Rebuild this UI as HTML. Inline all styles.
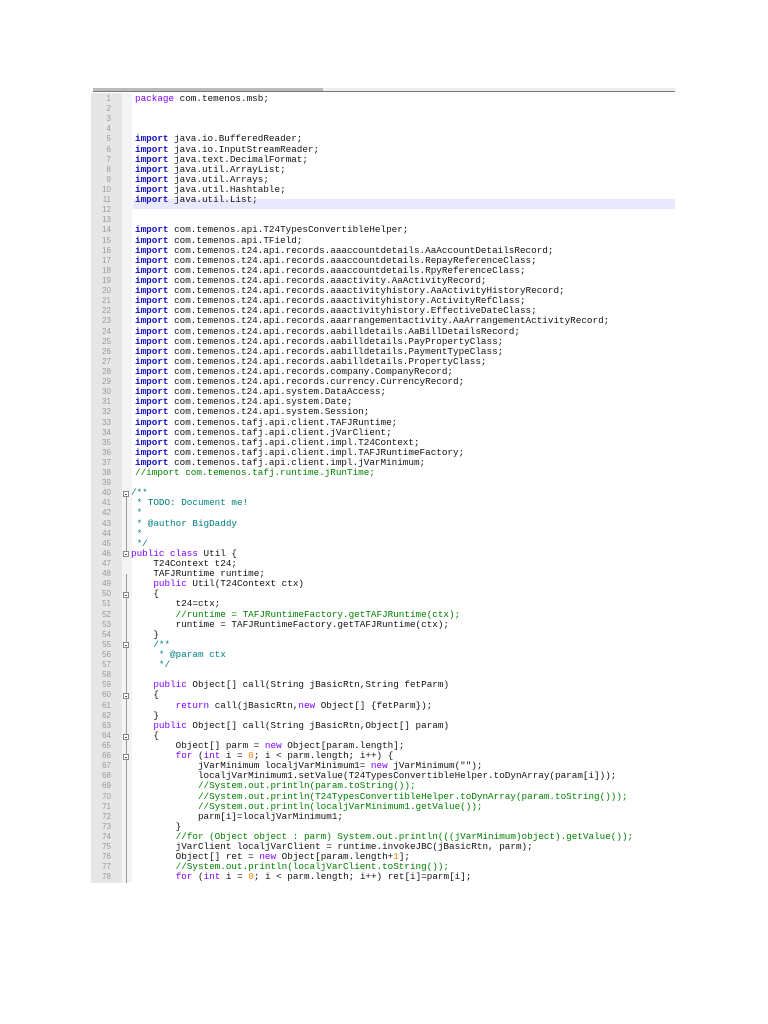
<!DOCTYPE html>
<html><head><meta charset="utf-8"><style>
html,body{margin:0;padding:0;background:#fff;width:768px;height:1024px;overflow:hidden}
.bar{position:absolute;left:93px;top:88px;width:582px;height:3px;background:#eee;border-bottom:1px solid #777}
.bar i{position:absolute;left:0;top:0;width:230px;height:3px;background:#bbb}
.gut{position:absolute;left:91px;top:93px;width:31px;height:790px;background:#e6e6e6}
.fold{position:absolute;left:122px;top:93px;width:10px;height:790px;background:#f4f4f4}
.hl{position:absolute;left:133px;top:199px;width:542px;height:10px;background:#e8e8ff}
.nums{position:absolute;left:91px;top:94px;width:20px;text-align:right;font:8px/10.12px "Liberation Sans",sans-serif;color:#999}
.nums div{height:10.12px}
.code{position:absolute;left:131px;top:94px;font:9.3px/10.12px "Liberation Mono",monospace;color:#111}
.code div{height:10.12px;white-space:pre}
.k{color:#1010c0;font-weight:bold}.p{color:#8000ff}.c{color:#008000}.d{color:#008080}.n{color:#ff8000}.i{padding-left:4px}
.fb{position:absolute;left:123px;width:6px;height:6px;border:1px solid #888;background:#fff;box-sizing:border-box}
.fb:after{content:"";position:absolute;left:1px;top:2px;width:2px;height:1px;background:#555}
.vl{position:absolute;left:126px;width:1px;background:#999}
</style></head><body>
<div class="bar"><i></i></div>
<div class="gut"></div><div class="fold"></div><div class="hl"></div>
<div class="vl" style="top:493px;height:60px"></div>
<div class="vl" style="top:574px;height:309px"></div>
<div class="fb" style="top:491px"></div>
<div class="fb" style="top:551px"></div>
<div class="fb" style="top:592px"></div>
<div class="fb" style="top:642px"></div>
<div class="fb" style="top:693px"></div>
<div class="fb" style="top:734px"></div>
<div class="fb" style="top:754px"></div>
<div class="nums" id="n"></div>
<div class="code">
<div class="i"><span class="p">package</span> com.temenos.msb;</div>
<div></div><div></div><div></div>
<div class="i"><span class="k">import</span> java.io.BufferedReader;</div>
<div class="i"><span class="k">import</span> java.io.InputStreamReader;</div>
<div class="i"><span class="k">import</span> java.text.DecimalFormat;</div>
<div class="i"><span class="k">import</span> java.util.ArrayList;</div>
<div class="i"><span class="k">import</span> java.util.Arrays;</div>
<div class="i"><span class="k">import</span> java.util.Hashtable;</div>
<div class="i"><span class="k">import</span> java.util.List;</div>
<div></div><div></div>
<div class="i"><span class="k">import</span> com.temenos.api.T24TypesConvertibleHelper;</div>
<div class="i"><span class="k">import</span> com.temenos.api.TField;</div>
<div class="i"><span class="k">import</span> com.temenos.t24.api.records.aaaccountdetails.AaAccountDetailsRecord;</div>
<div class="i"><span class="k">import</span> com.temenos.t24.api.records.aaaccountdetails.RepayReferenceClass;</div>
<div class="i"><span class="k">import</span> com.temenos.t24.api.records.aaaccountdetails.RpyReferenceClass;</div>
<div class="i"><span class="k">import</span> com.temenos.t24.api.records.aaactivity.AaActivityRecord;</div>
<div class="i"><span class="k">import</span> com.temenos.t24.api.records.aaactivityhistory.AaActivityHistoryRecord;</div>
<div class="i"><span class="k">import</span> com.temenos.t24.api.records.aaactivityhistory.ActivityRefClass;</div>
<div class="i"><span class="k">import</span> com.temenos.t24.api.records.aaactivityhistory.EffectiveDateClass;</div>
<div class="i"><span class="k">import</span> com.temenos.t24.api.records.aaarrangementactivity.AaArrangementActivityRecord;</div>
<div class="i"><span class="k">import</span> com.temenos.t24.api.records.aabilldetails.AaBillDetailsRecord;</div>
<div class="i"><span class="k">import</span> com.temenos.t24.api.records.aabilldetails.PayPropertyClass;</div>
<div class="i"><span class="k">import</span> com.temenos.t24.api.records.aabilldetails.PaymentTypeClass;</div>
<div class="i"><span class="k">import</span> com.temenos.t24.api.records.aabilldetails.PropertyClass;</div>
<div class="i"><span class="k">import</span> com.temenos.t24.api.records.company.CompanyRecord;</div>
<div class="i"><span class="k">import</span> com.temenos.t24.api.records.currency.CurrencyRecord;</div>
<div class="i"><span class="k">import</span> com.temenos.t24.api.system.DataAccess;</div>
<div class="i"><span class="k">import</span> com.temenos.t24.api.system.Date;</div>
<div class="i"><span class="k">import</span> com.temenos.t24.api.system.Session;</div>
<div class="i"><span class="k">import</span> com.temenos.tafj.api.client.TAFJRuntime;</div>
<div class="i"><span class="k">import</span> com.temenos.tafj.api.client.jVarClient;</div>
<div class="i"><span class="k">import</span> com.temenos.tafj.api.client.impl.T24Context;</div>
<div class="i"><span class="k">import</span> com.temenos.tafj.api.client.impl.TAFJRuntimeFactory;</div>
<div class="i"><span class="k">import</span> com.temenos.tafj.api.client.impl.jVarMinimum;</div>
<div class="i"><span class="c">//import com.temenos.tafj.runtime.jRunTime;</span></div>
<div></div>
<div class="d">/**</div>
<div class="d"> * TODO: Document me!</div>
<div class="d"> *</div>
<div class="d"> * @author BigDaddy</div>
<div class="d"> *</div>
<div class="d"> */</div>
<div><span class="p">public class</span> Util {</div>
<div>    T24Context t24;</div>
<div>    TAFJRuntime runtime;</div>
<div>    <span class="p">public</span> Util(T24Context ctx)</div>
<div>    {</div>
<div>        t24=ctx;</div>
<div>        <span class="c">//runtime = TAFJRuntimeFactory.getTAFJRuntime(ctx);</span></div>
<div>        runtime = TAFJRuntimeFactory.getTAFJRuntime(ctx);</div>
<div>    }</div>
<div class="d">    /**</div>
<div class="d">     * @param ctx</div>
<div class="d">     */</div>
<div></div>
<div>    <span class="p">public</span> Object[] call(String jBasicRtn,String fetParm)</div>
<div>    {</div>
<div>        <span class="p">return</span> call(jBasicRtn,<span class="p">new</span> Object[] {fetParm});</div>
<div>    }</div>
<div>    <span class="p">public</span> Object[] call(String jBasicRtn,Object[] param)</div>
<div>    {</div>
<div>        Object[] parm = <span class="p">new</span> Object[param.length];</div>
<div>        <span class="p">for</span> (<span class="p">int</span> i = <span class="n">0</span>; i &lt; parm.length; i++) {</div>
<div>            jVarMinimum localjVarMinimum1= <span class="p">new</span> jVarMinimum("");</div>
<div>            localjVarMinimum1.setValue(T24TypesConvertibleHelper.toDynArray(param[i]));</div>
<div class="c">            //System.out.println(param.toString());</div>
<div class="c">            //System.out.println(T24TypesConvertibleHelper.toDynArray(param.toString()));</div>
<div class="c">            //System.out.println(localjVarMinimum1.getValue());</div>
<div>            parm[i]=localjVarMinimum1;</div>
<div>        }</div>
<div class="c">        //for (Object object : parm) System.out.println(((jVarMinimum)object).getValue());</div>
<div>        jVarClient localjVarClient = runtime.invokeJBC(jBasicRtn, parm);</div>
<div>        Object[] ret = <span class="p">new</span> Object[param.length+<span class="n">1</span>];</div>
<div class="c">        //System.out.println(localjVarClient.toString());</div>
<div>        <span class="p">for</span> (<span class="p">int</span> i = <span class="n">0</span>; i &lt; parm.length; i++) ret[i]=parm[i];</div>
</div>
<script>var s="";for(var i=1;i<=78;i++)s+="<div>"+i+"</div>";document.getElementById("n").innerHTML=s;</script>
</body></html>
